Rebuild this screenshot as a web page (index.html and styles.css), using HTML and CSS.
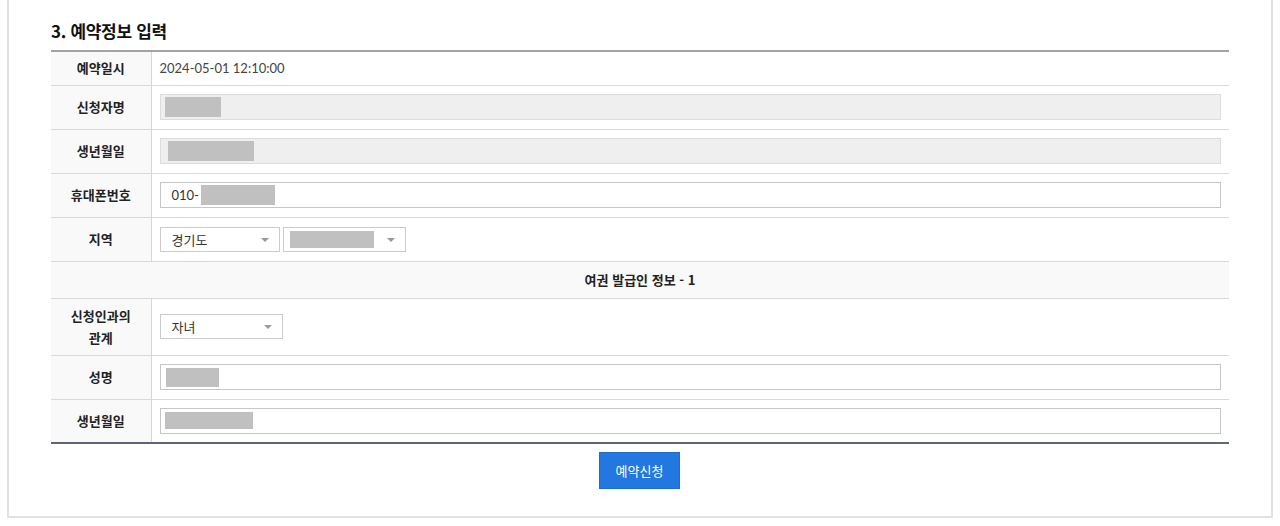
FILE: index.html
```html
<!DOCTYPE html>
<html lang="ko">
<head>
<meta charset="utf-8">
<title>예약정보 입력</title>
<link rel="stylesheet" href="styles.css">
</head>
<body>
<div class="panel">
  <h3 class="title">3. 예약정보 입력</h3>
  <table class="form">
    <tr class="r-first">
      <th>예약일시</th>
      <td class="val">2024-05-01 12:10:00</td>
    </tr>
    <tr>
      <th>신청자명</th>
      <td><div class="field ro"><span class="mask m1"></span></div></td>
    </tr>
    <tr>
      <th>생년월일</th>
      <td><div class="field ro"><span class="mask m2"></span></div></td>
    </tr>
    <tr>
      <th>휴대폰번호</th>
      <td><div class="field phone"><span class="ptxt">010-</span><span class="mask m3"></span></div></td>
    </tr>
    <tr>
      <th>지역</th>
      <td>
        <div class="selects">
          <div class="select s1"><span class="stxt">경기도</span><span class="arrow"></span></div>
          <div class="select s2"><span class="mask m4"></span><span class="arrow"></span></div>
        </div>
      </td>
    </tr>
    <tr class="r-head">
      <td colspan="2" class="subhead">여권 발급인 정보 - 1</td>
    </tr>
    <tr class="r-tall">
      <th>신청인과의<br>관계</th>
      <td><div class="select s3"><span class="stxt">자녀</span><span class="arrow"></span></div></td>
    </tr>
    <tr>
      <th>성명</th>
      <td><div class="field"><span class="mask m5"></span></div></td>
    </tr>
    <tr class="r-last">
      <th>생년월일</th>
      <td><div class="field"><span class="mask m6"></span></div></td>
    </tr>
  </table>
  <div class="actions">
    <button class="btn" type="button">예약신청</button>
  </div>
</div>
</body>
</html>
```

FILE: styles.css
```css
* { box-sizing: border-box; }
html, body { margin: 0; padding: 0; background: #fff; }
body {
  font-family: "Lato", "Noto Sans CJK KR", sans-serif;
  font-size: 13px;
  color: #222;
}
.panel {
  margin-left: 7px;
  width: 1266px;
  height: 518px;
  border: 2px solid #e2e2e2;
  border-top: none;
  padding: 19px 42px 0 42px;
}
.title {
  margin: 0 0 7px 0;
  height: 24px;
  line-height: 24px;
  font-size: 17px;
  font-weight: bold;
  color: #111;
  font-family: "Noto Sans CJK KR", sans-serif;
  letter-spacing: -0.3px;
}
.form {
  width: 1178px;
  border-collapse: collapse;
  border-top: 2px solid #a3a3a3;
  border-bottom: 2px solid #5f6573;
}
.form tr { height: 44px; }
.form tr.r-first { height: 34px; }
.form tr.r-head { height: 37px; }
.form tr.r-tall { height: 57px; }
.form th, .form td {
  border-top: 1px solid #d9d9d9;
  padding: 0 8px;
  vertical-align: middle;
}
.form tr.r-first th, .form tr.r-first td { border-top: none; }
.form th {
  width: 100px;
  background: #f9f9f9;
  border-right: 1px solid #d6d6d6;
  font-family: "Noto Sans CJK KR", sans-serif;
  font-weight: bold;
  font-size: 13px;
  line-height: 22px;
  color: #222;
  text-align: center;
  padding: 0;
}
.val { color: #444; font-size: 13px; padding-top: 1px; }
.subhead {
  background: #f9f9f9;
  text-align: center;
  font-family: "Noto Sans CJK KR", sans-serif;
  font-weight: bold;
  font-size: 13px;
  color: #222;
}
.field {
  width: 1061px;
  height: 26px;
  border: 1px solid #c6c6c6;
  background: #fff;
  display: flex;
  align-items: center;
  padding-left: 4px;
}
.field.ro {
  background: #efefef;
  border-color: #dcdcdc;
}
.field.phone { padding-left: 11px; }
.ptxt { color: #333; font-size: 13px; }
.mask {
  display: block;
  background: #c0c0c0;
  height: 20px;
}
.m1 { width: 56px; }
.m2 { width: 86px; margin-left: 3px; }
.m3 { width: 74px; margin-left: 2px; }
.m4 { width: 84px; height: 17px; }
.m5 { width: 53px; height: 19px; margin-left: 1px; }
.m6 { width: 88px; height: 17px; }
.selects { display: flex; gap: 3px; }
.select {
  position: relative;
  height: 25px;
  border: 1px solid #cbcbcb;
  background: #fff;
  display: flex;
  align-items: center;
  padding-left: 11px;
  font-family: "Noto Sans CJK KR", sans-serif;
  font-size: 13px;
  color: #333;
}
.s1 { width: 120px; }
.s2 { width: 123px; padding-left: 6px; }
.s3 { width: 123px; }
.arrow {
  position: absolute;
  right: 10px;
  top: 10px;
  width: 0;
  height: 0;
  border-left: 4px solid transparent;
  border-right: 4px solid transparent;
  border-top: 4px solid #9a9a9a;
}
.actions {
  display: flex;
  justify-content: center;
  padding-top: 8px;
  padding-right: 1px;
}
.btn {
  width: 81px;
  height: 37px;
  background: #2277e0;
  border: 1px solid #1e6ccd;
  color: #fff;
  font-family: "Noto Sans CJK KR", sans-serif;
  font-size: 13px;
  padding: 0;
  margin: 0;
}
```
